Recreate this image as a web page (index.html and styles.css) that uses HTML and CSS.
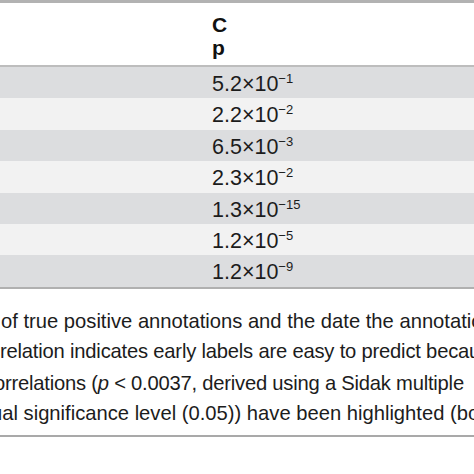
FILE: index.html
```html
<!DOCTYPE html>
<html>
<head>
<meta charset="utf-8">
<link rel="stylesheet" href="styles.css">
</head>
<body>
<div class="page">
  <div class="table">
    <div class="head">
      <div class="lead"></div>
      <div class="col-head">C<br>p</div>
    </div>
    <div class="row dark"><div class="lead"></div><div class="val">5.2×10<span class="sup">−1</span></div></div>
    <div class="row light"><div class="lead"></div><div class="val">2.2×10<span class="sup">−2</span></div></div>
    <div class="row dark"><div class="lead"></div><div class="val">6.5×10<span class="sup">−3</span></div></div>
    <div class="row light"><div class="lead"></div><div class="val">2.3×10<span class="sup">−2</span></div></div>
    <div class="row dark"><div class="lead"></div><div class="val">1.3×10<span class="sup">−15</span></div></div>
    <div class="row light"><div class="lead"></div><div class="val">1.2×10<span class="sup">−5</span></div></div>
    <div class="row dark"><div class="lead"></div><div class="val">1.2×10<span class="sup">−9</span></div></div>
  </div>
  <div class="caption">
    <p class="para">
      <span class="line l1">of true positive annotations and the date the annotation</span>
      <span class="line l2">relation indicates early labels are easy to predict because</span>
    </p>
    <p class="para">
      <span class="line l3">orrelations (<i>p</i> &lt; 0.0037, derived using a Sidak multiple</span>
      <span class="line l4">ual significance level (0.05)) have been highlighted (bold).</span>
    </p>
  </div>
</div>
</body>
</html>
```

FILE: styles.css
```css
html, body {
  margin: 0;
  padding: 0;
  background: #ffffff;
}

.page {
  width: 474px;
  height: 474px;
  overflow: hidden;
  font-family: "Liberation Sans", Arial, Helvetica, sans-serif;
  color: #1c1c1c;
}

.table {
  border-top: 3px solid #b2b2b2;
  border-bottom: 2px solid #b0b0b0;
}

.head {
  display: grid;
  grid-template-columns: 212px 1fr;
  height: 64px;
  box-sizing: border-box;
  padding-top: 10px;
  border-bottom: 2px solid #bdbdbd;
}

.col-head {
  font-weight: bold;
  font-size: 21px;
  line-height: 23px;
  color: #111;
}

.row {
  display: grid;
  grid-template-columns: 212px 1fr;
  height: 31.4px;
  box-sizing: border-box;
  padding-top: 5px;
}

.row.dark { background: #dcdddf; }
.row.light { background: #f2f2f2; }

.val {
  font-size: 21.5px;
  line-height: 24px;
  white-space: nowrap;
}

.sup {
  font-size: 13px;
  line-height: 0;
  vertical-align: 8px;
}

.caption {
  padding-top: 17px;
  padding-bottom: 7px;
  border-bottom: 2px solid #a9a9a9;
  overflow: hidden;
}

.para {
  margin: 0;
}

.para + .para {
  margin-top: 2.5px;
}

.line {
  display: block;
  white-space: nowrap;
  font-size: 20.2px;
  line-height: 30px;
}

.l1 { margin-left: 1px; }
.l2 { margin-left: 0px; letter-spacing: -0.2px; }
.l3 { margin-left: -6px; letter-spacing: -0.22px; }
.l4 { margin-left: -9px; }
```
